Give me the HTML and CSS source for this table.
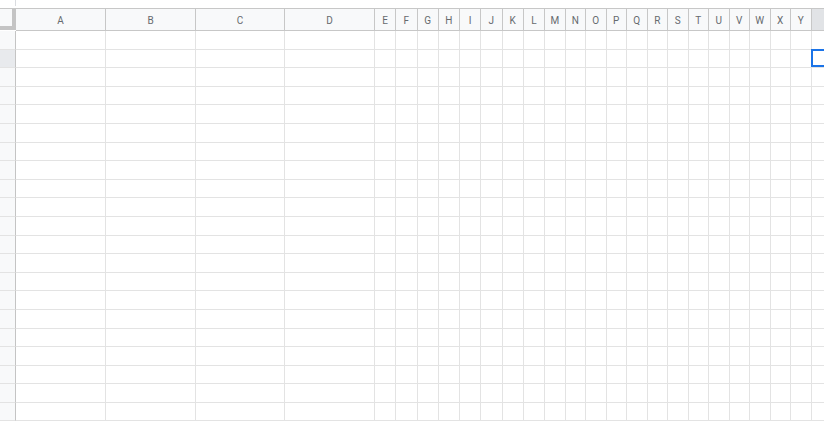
FILE: index.html
```html
<!DOCTYPE html>
<html>
<head>
<meta charset="utf-8">
<link rel="stylesheet" href="styles.css">
</head>
<body>
<div class="sheet">
  <div class="topstrip"><div class="topcorner"></div><div class="topfill"></div></div>
  <div class="grid" id="grid"></div>
</div>
<script src="app.js"></script>
</body>
</html>
```
FILE: styles.css
```css
* { box-sizing: border-box; }
html, body { margin: 0; padding: 0; background: #fff; overflow: hidden; }
body { width: 824px; height: 421px; font-family: Roboto, "Noto Sans", sans-serif; }
.sheet { width: 824px; height: 421px; overflow: hidden; }
.topstrip { display: flex; height: 9px; border-bottom: 1px solid #c7c7c7; }
.topcorner { width: 16px; height: 6px; border-right: 1px solid #dadce0; }
.topfill { flex: 1; }
.grid {
  display: grid;
  grid-template-columns: 16px 90px 90px 89px 90px repeat(8, 21.25px) repeat(13, 20.5px) 60px;
  grid-template-rows: 22px;
  grid-auto-rows: 18.6px;
  width: 900px;
}
.cell { border-right: 1px solid #e3e3e3; border-bottom: 1px solid #e3e3e3; background: #fff; position: relative; }
.colhead {
  background: #f8f9fa; border-right: 1px solid #c7c7c7; border-bottom: 1px solid #c7c7c7;
  display: flex; align-items: center; justify-content: center;
  font-size: 10px; color: #666a6e; padding-top: 1px;
}
.colhead.sel { background: #e1e3e6; }
.corner {
  background: #f8f9fa; border-right: 4px solid #c4c4c4; border-bottom: 4px solid #c4c4c4;
  margin-bottom: 1px;
}
.rowhead { background: #f8f9fa; border-right: 1px solid #c4c4c4; border-bottom: 1px solid #e3e3e3; }
.rowhead.sel { background: #e8eaed; }
.active::after {
  content: ""; position: absolute; left: -1px; top: -1px; right: -40px; bottom: 0;
  border: 2px solid #1a73e8;
}
```
FILE: app.js
```js
const cols = ["A","B","C","D","E","F","G","H","I","J","K","L","M","N","O","P","Q","R","S","T","U","V","W","X","Y",""];
const g = document.getElementById("grid");
let html = '<div class="corner"></div>';
cols.forEach((c) => {
  html += '<div class="colhead' + (c === "" ? " sel" : "") + '">' + c + '</div>';
});
for (let r = 1; r <= 22; r++) {
  html += '<div class="rowhead' + (r === 2 ? " sel" : "") + '"></div>';
  cols.forEach((c) => {
    html += '<div class="cell' + (r === 2 && c === "" ? " active" : "") + '"></div>';
  });
}
g.innerHTML = html;
```
